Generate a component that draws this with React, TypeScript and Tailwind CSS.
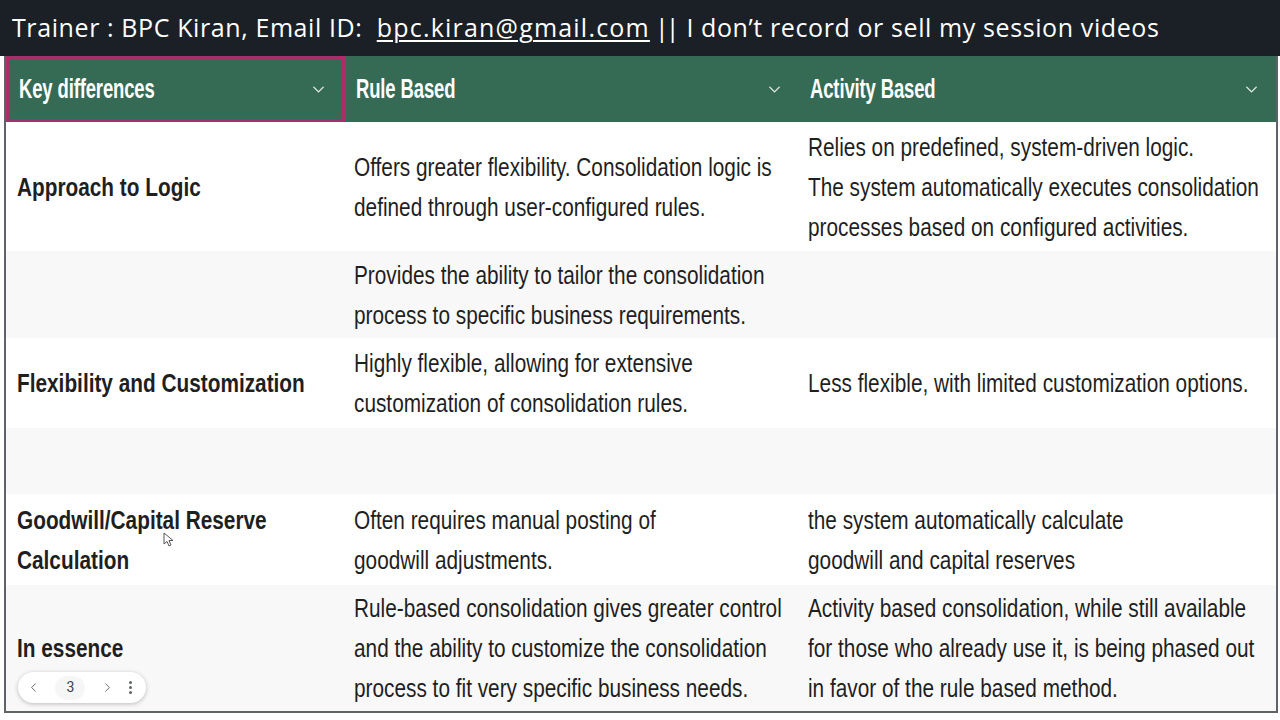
import { ChevronDown, ChevronLeft, ChevronRight } from "lucide-react";

const body = "font-['Liberation_Sans',Arial,sans-serif]";

const rows = [
  {
    label: ["Approach to Logic"],
    rule: ["Offers greater flexibility. Consolidation logic is", "defined through user-configured rules."],
    activity: [
      "Relies on predefined, system-driven logic.",
      "The system automatically executes consolidation",
      "processes based on configured activities.",
    ],
    h: "h-[129px]",
    bg: "bg-white",
  },
  {
    label: [],
    rule: ["Provides the ability to tailor the consolidation", "process to specific business requirements."],
    activity: [],
    h: "h-[87px]",
    bg: "bg-[#f8f8f8]",
  },
  {
    label: ["Flexibility and Customization"],
    rule: ["Highly flexible, allowing for extensive", "customization of consolidation rules."],
    activity: ["Less flexible, with limited customization options."],
    h: "h-[90px]",
    bg: "bg-white",
  },
  {
    label: [],
    rule: [],
    activity: [],
    h: "h-[66px]",
    bg: "bg-[#f8f8f8]",
  },
  {
    label: ["Goodwill/Capital Reserve", "Calculation"],
    rule: ["Often requires manual posting of", "goodwill adjustments."],
    activity: ["the system automatically calculate", "goodwill and capital reserves"],
    h: "h-[91px]",
    bg: "bg-white",
  },
  {
    label: ["In essence"],
    rule: [
      "Rule-based consolidation gives greater control",
      "and the ability to customize the consolidation",
      "process to fit very specific business needs.",
    ],
    activity: [
      "Activity based consolidation, while still available",
      "for those who already use it, is being phased out",
      "in favor of the rule based method.",
    ],
    h: "h-[126px]",
    bg: "bg-[#f8f8f8]",
    last: true,
  },
];

// the slide uses a narrow face; squeeze Liberation Sans to match
function Lines({ lines, bold }: { lines: string[]; bold?: boolean }) {
  return (
    <div className={`flex flex-col ${bold ? "font-bold" : ""}`}>
      {lines.map((l, i) => (
        <span key={i} className="block w-[125%] whitespace-nowrap leading-[40px] scale-x-[0.8] origin-left">
          {l}
        </span>
      ))}
    </div>
  );
}

function Head({ label, first }: { label: string; first?: boolean }) {
  return (
    <div
      className={`flex items-center justify-between ${
        first ? "pl-[10px] pr-[14px] border-[3px] border-[#a62f6c]" : "pl-[11px] pr-[15px]"
      }`}
    >
      <span className="whitespace-nowrap scale-x-[0.66] origin-left tracking-[-0.2px]">{label}</span>
      <ChevronDown size={19} strokeWidth={1.75} className="text-[#e3ede7]" />
    </div>
  );
}

export default function App() {
  return (
    <div className="w-[1280px] h-[720px] overflow-hidden bg-white flex flex-col">
      {/* trainer banner */}
      <div className="h-[56px] bg-[#1b2027] flex items-center pl-[12px] text-white text-[25px] font-['Open_Sans',sans-serif] tracking-[0.6px] whitespace-nowrap">
        <span>Trainer : BPC Kiran, Email ID:&nbsp;&nbsp;</span>
        <span className="underline underline-offset-[3px] decoration-[1.5px] tracking-[1.2px]">bpc.kiran@gmail.com</span>
        <span className="pl-[5px] pr-[10px] tracking-[-3px]">||</span>
        <span>I don’t record or sell my session videos</span>
      </div>

      <div className="flex-1 flex flex-col pl-[4px] pr-[2px]">
        <div className="border-l-2 border-r-2 border-b-2 border-[#5f6368] flex flex-col">
          {/* header */}
          <div className={`grid grid-cols-[339px_454px_1fr] h-[66px] bg-[#356b55] text-white text-[28px] font-bold ${body}`}>
            <Head label="Key differences" first />
            <Head label="Rule Based" />
            <Head label="Activity Based" />
          </div>

          {/* body rows */}
          {rows.map((r, i) => (
            <div
              key={i}
              className={`relative grid grid-cols-[339px_454px_1fr] ${r.h} ${r.bg} text-[#1f1f1f] text-[26px] ${body}`}
            >
              <div className="flex items-center pl-[11px]">
                <Lines lines={r.label} bold />
              </div>
              <div className="flex items-center pl-[9px]">
                <Lines lines={r.rule} />
              </div>
              <div className="flex items-center pl-[9px]">
                <Lines lines={r.activity} />
              </div>

              {r.last && (
                <div className="absolute left-[12px] bottom-[8px] w-[128px] h-[31px] rounded-full bg-white shadow-[0_1px_4px_rgba(0,0,0,0.25)] flex items-center justify-between pl-[8px] pr-[14px] text-[#5f6368] font-['Roboto',sans-serif]">
                  <ChevronLeft size={15} strokeWidth={1.5} />
                  <span className="w-[30px] h-[24px] rounded-full bg-[#f6f6f6] flex items-center justify-center text-[14px] text-[#3c4043]">3</span>
                  <ChevronRight size={15} strokeWidth={1.5} />
                  <span className="flex flex-col gap-[2px]">
                    <span className="w-[3px] h-[3px] rounded-full bg-[#5f6368]" />
                    <span className="w-[3px] h-[3px] rounded-full bg-[#5f6368]" />
                    <span className="w-[3px] h-[3px] rounded-full bg-[#5f6368]" />
                  </span>
                </div>
              )}

              {i === 4 && (
                <svg className="absolute left-[157px] top-[38px]" width="12" height="16" viewBox="0 0 12 16">
                  <path d="M1 1 L1 12 L4 9.5 L6 14 L8 13 L6 8.5 L10 8.5 Z" fill="#fff" stroke="#555" strokeWidth="1" />
                </svg>
              )}
            </div>
          ))}
        </div>
      </div>
    </div>
  );
}
